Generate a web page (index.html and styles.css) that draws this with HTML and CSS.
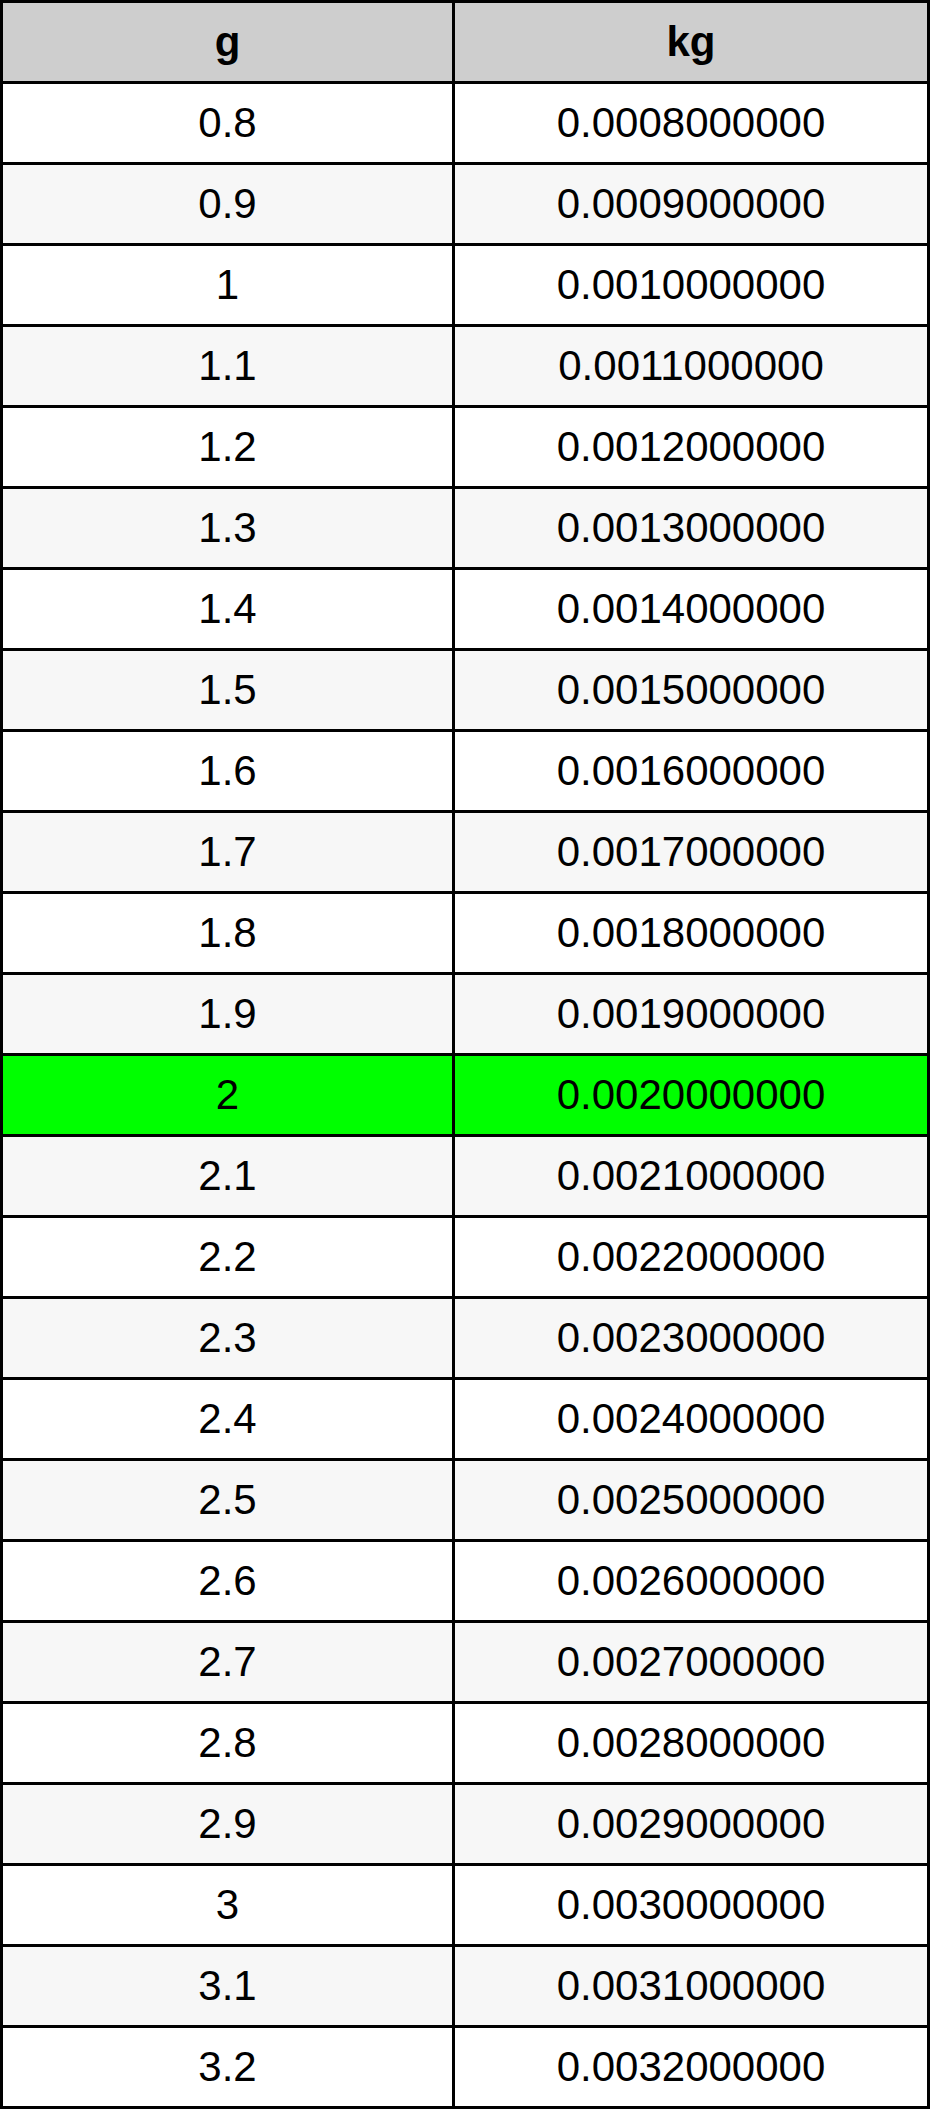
FILE: index.html
```html
<!DOCTYPE html>
<html>
<head>
<meta charset="utf-8">
<link rel="stylesheet" href="styles.css">
</head>
<body>
<table class="conv">
<thead>
<tr><th class="c1">g</th><th class="c2">kg</th></tr>
</thead>
<tbody>
<tr><td>0.8</td><td>0.0008000000</td></tr>
<tr class="alt"><td>0.9</td><td>0.0009000000</td></tr>
<tr><td>1</td><td>0.0010000000</td></tr>
<tr class="alt"><td>1.1</td><td>0.0011000000</td></tr>
<tr><td>1.2</td><td>0.0012000000</td></tr>
<tr class="alt"><td>1.3</td><td>0.0013000000</td></tr>
<tr><td>1.4</td><td>0.0014000000</td></tr>
<tr class="alt"><td>1.5</td><td>0.0015000000</td></tr>
<tr><td>1.6</td><td>0.0016000000</td></tr>
<tr class="alt"><td>1.7</td><td>0.0017000000</td></tr>
<tr><td>1.8</td><td>0.0018000000</td></tr>
<tr class="alt"><td>1.9</td><td>0.0019000000</td></tr>
<tr class="hl"><td>2</td><td>0.0020000000</td></tr>
<tr class="alt"><td>2.1</td><td>0.0021000000</td></tr>
<tr><td>2.2</td><td>0.0022000000</td></tr>
<tr class="alt"><td>2.3</td><td>0.0023000000</td></tr>
<tr><td>2.4</td><td>0.0024000000</td></tr>
<tr class="alt"><td>2.5</td><td>0.0025000000</td></tr>
<tr><td>2.6</td><td>0.0026000000</td></tr>
<tr class="alt"><td>2.7</td><td>0.0027000000</td></tr>
<tr><td>2.8</td><td>0.0028000000</td></tr>
<tr class="alt"><td>2.9</td><td>0.0029000000</td></tr>
<tr><td>3</td><td>0.0030000000</td></tr>
<tr class="alt"><td>3.1</td><td>0.0031000000</td></tr>
<tr><td>3.2</td><td>0.0032000000</td></tr>
</tbody>
</table>
</body>
</html>
```
FILE: styles.css
```css
html, body {
  margin: 0;
  padding: 0;
  background: #ffffff;
}

.conv {
  border-collapse: separate;
  border-spacing: 3px;
  background: #000000;
  width: 930px;
  table-layout: fixed;
  font-family: "Liberation Sans", Arial, sans-serif;
  font-size: 42px;
  color: #000000;
}

.conv th,
.conv td {
  height: 78px;
  padding: 0;
  text-align: center;
  vertical-align: middle;
  background: #ffffff;
  line-height: 1;
}

.conv th {
  background: #cecece;
  font-weight: bold;
}

.conv .c1 {
  width: 449px;
}

.conv .c2 {
  width: 472px;
}

.conv tr.alt td {
  background: #f7f7f7;
}

.conv tr.hl td {
  background: #00ff00;
}
```
